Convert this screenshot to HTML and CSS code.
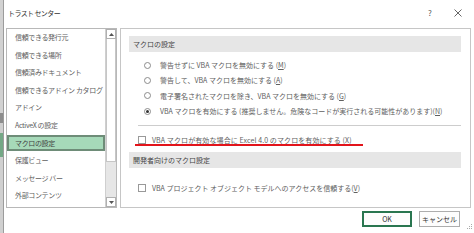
FILE: index.html
```
<!DOCTYPE html>
<html lang="ja">
<head>
	<meta charset="UTF-8">
	<title>トラスト センター</title>
	<link rel="stylesheet" href="styles.css">
</head>
<body>
	<div class="window">
		<div class="backdrop"></div>
		<div class="dialog">
			<div class="titlebar">
				<span class="title">トラスト センター</span>
				<span class="help">?</span>
				<span class="close">
					<svg width="8" height="8" viewBox="0 0 8 8"><path d="M0.5 0.5L7.5 7.5M7.5 0.5L0.5 7.5" stroke="#555" stroke-width="0.9" fill="none"/></svg>
				</span>
			</div>
			<div class="main">
				<div class="nav">
					<ul class="nav-list">
						<li>信頼できる発行元</li>
						<li>信頼できる場所</li>
						<li>信頼済みドキュメント</li>
						<li>信頼できるアドイン カタログ</li>
						<li>アドイン</li>
						<li>ActiveX の設定</li>
						<li class="active">マクロの設定</li>
						<li>保護ビュー</li>
						<li>メッセージ バー</li>
						<li>外部コンテンツ</li>
					</ul>
					<div class="scrollbar">
						<div class="arrow"><svg width="5" height="3" viewBox="0 0 5 3"><path d="M0 3L2.5 0L5 3Z" fill="#555"/></svg></div>
						<div class="thumb"></div>
						<div class="track"></div>
						<div class="arrow"><svg width="5" height="3" viewBox="0 0 5 3"><path d="M0 0L2.5 3L5 0Z" fill="#555"/></svg></div>
					</div>
				</div>
				<div class="panel">
					<div class="section-title">マクロの設定</div>
					<div class="options">
						<div class="opt"><span class="radio"></span>警告せずに VBA マクロを無効にする (<u>M</u>)</div>
						<div class="opt"><span class="radio"></span>警告して、VBA マクロを無効にする (<u>A</u>)</div>
						<div class="opt"><span class="radio"></span>電子署名されたマクロを除き、VBA マクロを無効にする (<u>G</u>)</div>
						<div class="opt"><span class="radio checked"></span>VBA マクロを有効にする (推奨しません。危険なコードが実行される可能性があります)(<u>N</u>)</div>
					</div>
					<div class="sep"></div>
					<div class="check-row marked"><span class="box"></span>VBA マクロが有効な場合に Excel 4.0 のマクロを有効にする (<u>X</u>)<span class="redline"></span></div>
					<div class="section-title second">開発者向けのマクロ設定</div>
					<div class="check-row last"><span class="box"></span>VBA プロジェクト オブジェクト モデルへのアクセスを信頼する(<u>V</u>)</div>
				</div>
			</div>
			<div class="footer">
				<button class="btn ok">OK</button>
				<button class="btn">キャンセル</button>
			</div>
			<div class="grip">
				<svg width="6" height="6" viewBox="0 0 6 6"><g fill="#aaa"><rect x="4" y="0" width="1" height="1"/><rect x="2" y="2" width="1" height="1"/><rect x="4" y="2" width="1" height="1"/><rect x="0" y="4" width="1" height="1"/><rect x="2" y="4" width="1" height="1"/><rect x="4" y="4" width="1" height="1"/></g></svg>
			</div>
		</div>
	</div>
</body>
</html>
```
FILE: styles.css
```
*{
	padding: 0;
	margin: 0;
	box-sizing: border-box;
}
body{
	width: 474px;
	height: 233px;
	overflow: hidden;
	background: #fff;
	font-family: "Noto Sans CJK JP", "Liberation Sans", sans-serif;
	font-size: 7px;
	color: #606060;
}
.window{
	display: flex;
	height: 233px;
}
.backdrop{
	width: 3px;
	background: linear-gradient(to bottom, #d2d2d2 0, #d2d2d2 113px, #8d8d8d 113px, #8d8d8d 123px, #cfcfcf 123px, #cfcfcf 133px, #74a886 133px, #74a886 157px, #d0d0d0 157px);
}
.dialog{
	flex: 1;
	position: relative;
	border-left: 1px solid #9c9c9c;
	display: flex;
	flex-direction: column;
}
.titlebar{
	height: 28px;
	padding: 0 0 3px 4px;
	display: flex;
	align-items: center;
}
.title{
	flex: 1;
	font-size: 7px;
	letter-spacing: -0.6px;
	color: #333;
}
.help{
	width: 10px;
	font-size: 8px;
	color: #555;
	text-align: center;
	margin-right: 18px;
}
.close{
	width: 10px;
	margin-right: 11px;
	display: flex;
	justify-content: center;
}
.main{
	height: 180px;
	display: flex;
	padding-left: 2px;
	gap: 3px;
}

/* left list */
.nav{
	width: 111px;
	border: 1px solid #b8b8b8;
	display: flex;
}
.nav-list{
	flex: 1;
	list-style: none;
	overflow: hidden;
}
.nav-list li{
	height: 17.6px;
	line-height: 17.6px;
	padding-left: 8px;
	font-size: 7px;
	letter-spacing: -0.35px;
	white-space: nowrap;
}
.nav-list li.active{
	height: 16px;
	line-height: 16px;
	margin: 0.8px 0;
	background: #a6d9b9;
	box-shadow: inset 0 0 0 2px #6e8c78;
	color: #444;
}
.scrollbar{
	width: 11px;
	border-left: 1px solid #cfcfcf;
	display: flex;
	flex-direction: column;
}
.arrow{
	height: 10px;
	border: 1px solid #b0b0b0;
	display: flex;
	align-items: center;
	justify-content: center;
	background: #fff;
}
.thumb{
	height: 123px;
	border: 1px solid #c6c6c6;
	border-top: none;
	background: #fff;
}
.track{
	flex: 1;
	background: #e6e6e6;
}

/* right panel */
.panel{
	width: 351px;
	border: 1px solid #c6c6c6;
	padding: 7px 9px 0 8px;
}
.section-title{
	height: 16px;
	line-height: 16px;
	padding-left: 4px;
	background: #e6e6e6;
	color: #444;
}
.section-title.second{
	margin-top: 4.5px;
}
.options{
	padding-top: 5.5px;
}
.opt{
	height: 15.3px;
	display: flex;
	align-items: center;
	padding-left: 14.5px;
	white-space: nowrap;
}
.radio{
	width: 7px;
	height: 7px;
	border: 1px solid #8c8c8c;
	border-radius: 50%;
	margin-right: 9.5px;
	display: flex;
	align-items: center;
	justify-content: center;
	flex-shrink: 0;
}
.radio.checked::after{
	content: "";
	width: 3px;
	height: 3px;
	border-radius: 50%;
	background: #333;
}
.sep{
	height: 1px;
	background: #cdcdcd;
	margin: 6px 0 0 9px;
}
.check-row{
	position: relative;
	height: 15px;
	display: flex;
	align-items: center;
	padding-left: 9px;
	margin-top: 6.5px;
	white-space: nowrap;
	letter-spacing: 0.1px;
}
.check-row.last{
	margin-top: 12.5px;
	letter-spacing: 0;
}
.box{
	width: 8px;
	height: 8px;
	border: 1px solid #999;
	margin-right: 6px;
	flex-shrink: 0;
}
.redline{
	position: absolute;
	left: 6px;
	top: 12px;
	width: 228px;
	height: 1.6px;
	background: #e2141b;
}

/* buttons */
.footer{
	display: flex;
	justify-content: flex-end;
	gap: 7px;
	padding: 3px 14px 0 0;
}
.btn{
	height: 16px;
	font-family: inherit;
	font-size: 7px;
	color: #333;
	background: #fdfdfd;
	border: 1px solid #adadad;
	width: 41px;
}
.btn.ok{
	width: 50px;
	border: 2px solid #2a7650;
}
.grip{
	position: absolute;
	right: 1px;
	bottom: 3px;
	line-height: 0;
}
```
